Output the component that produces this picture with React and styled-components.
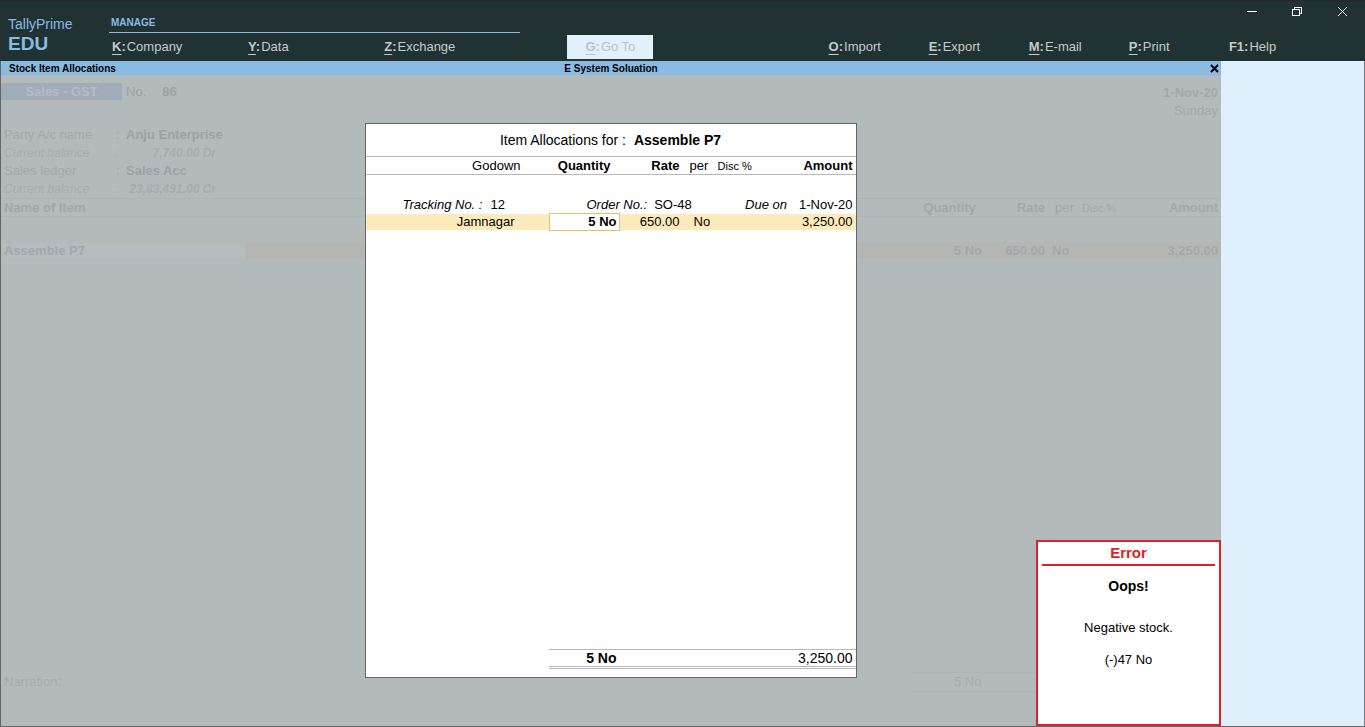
import React from "react";
import styled, { createGlobalStyle } from "styled-components";

const GlobalStyle = createGlobalStyle`
  *, *::before, *::after { box-sizing: border-box; }
  body {
    margin: 0;
    font-family: "Liberation Sans", Arial, sans-serif;
    font-size: 13px;
    line-height: 18px;
    color: #000;
  }
  button, input { font: inherit; color: inherit; }
  h1, h2, p, dl, dd { margin: 0; font: inherit; }
`;

const Screen = styled.div`
  display: flex;
  flex-direction: column;
  min-height: 100vh;
`;

/* ---------- top bar ---------- */

const TopBar = styled.header`
  display: grid;
  grid-template-columns: 109px 411fr 180fr 128fr 536fr;
  grid-template-rows: 32px 28px;
  border-top: 1px solid #2b2626;
  background: #203232;
  color: #c6cac9;
`;

const Brand = styled.div`
  grid-row: 1 / 3;
  padding: 14px 0 0 8px;
  color: #89bbe2;
  font-size: 14px;
`;

const Edition = styled.div`
  font-size: 19px;
  font-weight: bold;
  line-height: 22px;
`;

const GroupTitle = styled.div`
  padding: 13px 0 0 2px;
  border-bottom: 1px solid #89bbe2;
  color: #89bbe2;
  font-size: 10px;
  font-weight: bold;
`;

const WindowControls = styled.div`
  grid-column: 3 / 6;
  display: flex;
  justify-content: flex-end;
`;

const WindowButton = styled.button`
  width: 45px;
  height: 21px;
  padding: 0;
  border: 0;
  background: none;
  color: #fff;
`;

const WindowIcon = styled.svg`
  display: block;
  margin: 0 auto;
  fill: none;
  stroke: currentColor;
`;

const Menu = styled.nav`
  grid-row: 2;
  grid-column: ${(p) => p.$column};
  display: grid;
  grid-template-columns: ${(p) => p.$tracks};
  align-items: center;
  padding-left: ${(p) => p.$inset || 0}px;
`;

const MenuButton = styled.button`
  display: flex;
  gap: 1px;
  padding: 0;
  border: 0;
  background: none;
  text-align: left;
  white-space: nowrap;
`;

const GoToButton = styled(MenuButton)`
  justify-content: center;
  justify-self: center;
  align-items: center;
  width: 86px;
  height: 24px;
  background: #e2f0fa;
  color: #bcc3c9;
`;

const Shortcut = styled.b`
  u {
    text-decoration-thickness: 1px;
    text-underline-offset: 3px;
    text-decoration-skip-ink: none;
  }
`;

/* ---------- work area ---------- */

const Body = styled.div`
  flex: 1;
  display: flex;
  border-bottom: 1px solid #666;
`;

const Work = styled.main`
  flex: 1;
  display: flex;
  flex-direction: column;
  border-left: 1px solid #666;
`;

const SidePanel = styled.aside`
  width: 144px;
  border-right: 1px solid #777;
  background: #dff0fc;
`;

const TitleBar = styled.div`
  display: grid;
  grid-template-columns: 1fr auto 1fr;
  padding: 1px 8px 0;
  background: #89bbe2;
  font-size: 10px;
  font-weight: bold;
  line-height: 13px;
`;

const CloseButton = styled.button`
  justify-self: end;
  width: 9px;
  height: 13px;
  margin-right: -6px;
  padding: 0;
  border: 0;
  background: none;
`;

const Stage = styled.div`
  position: relative;
  flex: 1;
  display: flex;
  background: #b3babc;
`;

const Voucher = styled.section`
  flex: 1;
  display: flex;
  flex-direction: column;
  padding: 8px 0 34px;
  color: #a2a8aa;
`;

const VoucherHead = styled.div`
  display: flex;
  align-items: flex-start;
  margin-bottom: 6px;
  line-height: 17px;
`;

const VoucherType = styled.div`
  width: 121px;
  background: #a1acb9;
  color: #b3bcc5;
  font-weight: bold;
  text-align: center;
`;

const VoucherNumber = styled.div`
  display: flex;
  gap: 16px;
  padding-left: 4px;
  color: #9ca2a4;
`;

const VoucherDate = styled.div`
  margin-left: auto;
  padding: 1px 3px 0 0;
  line-height: 18px;
  text-align: right;
`;

const Fields = styled.dl`
  padding-left: 3px;
`;

const Field = styled.div`
  display: grid;
  grid-template-columns: 112px 10px auto 1fr;
  ${(p) => p.$minor && `font-size: 12px; font-style: italic; color: #a6adaf;`}

  dd { font-weight: bold; ${(p) => (p.$minor ? "width: 90px; text-align: right;" : "color: #9ca2a4;")} }
`;

const Table = styled.table`
  width: 100%;
  border-collapse: collapse;
  table-layout: fixed;

  td, th { padding: 0; text-align: right; }
`;

const HeadRow = styled.tr`
  height: 18px;
  line-height: 16px;
  border-top: 1px solid ${(p) => p.$line};
  border-bottom: 1px solid ${(p) => p.$line};
`;

const HeadCell = styled.th`
  && {
    padding-left: ${(p) => p.$left || 0}px;
    padding-right: ${(p) => p.$right || 0}px;
    text-align: ${(p) => p.$align || "right"};
  }
  font-weight: ${(p) => (p.$plain ? "normal" : "bold")};
  font-size: ${(p) => (p.$small ? 11 : 13)}px;
  white-space: nowrap;
`;

const Cell = styled.td`
  && {
    padding-left: ${(p) => p.$left || 0}px;
    padding-right: ${(p) => p.$right || 0}px;
    text-align: ${(p) => p.$align || "right"};
  }
`;

const SpacerRow = styled.tr`
  height: ${(p) => p.$height}px;
`;

const ItemRow = styled.tr`
  height: 17px;
  line-height: 17px;
  background: #b4b6b4;
  font-weight: bold;
`;

const ItemInput = styled.input`
  display: block;
  width: 245px;
  height: 17px;
  padding: 0 0 0 2px;
  border: 1px solid #b6b9b4;
  border-radius: 0;
  outline: 0;
  background: #b5bbbe;
  font-weight: bold;
`;

const VoucherFoot = styled.footer`
  display: grid;
  grid-template-columns: 1fr 310px;
  margin-top: auto;
  padding-left: 3px;
  line-height: 18px;
  color: #a6acae;

  label { padding-top: 1px; }
`;

const VoucherTotal = styled.div`
  padding-left: 43px;
  border-top: 1px solid #afb5b7;
  border-bottom: 1px solid #afb5b7;
`;

/* ---------- allocation dialog ---------- */

const Overlay = styled.div`
  position: absolute;
  inset: 0;
  display: flex;
  justify-content: center;
  padding: 48px 1px 48px 0;
`;

const Dialog = styled.section`
  display: flex;
  flex-direction: column;
  width: 492px;
  padding-bottom: 8px;
  border: 1px solid #666;
  background: #fff;
`;

const DialogTitle = styled.h2`
  display: flex;
  justify-content: center;
  gap: 8px;
  font-size: 14px;
  line-height: 32px;
`;

const Tracking = styled.div`
  display: flex;
  padding: 0 3px 0 37px;
  line-height: 18px;
  white-space: pre;
`;

const TrackingPart = styled.div`
  display: flex;
  gap: ${(p) => p.$gap}px;
  width: ${(p) => p.$width || "auto"};
  margin-left: ${(p) => (p.$end ? "auto" : 0)};
`;

const AllocationRow = styled.tr`
  height: 16px;
  line-height: 16px;
  background: #fdeabc;
`;

const QuantityInput = styled.input`
  display: block;
  width: 71px;
  height: 18px;
  margin: -1px 0;
  padding: 0 2px;
  border: 1px solid #e8c067;
  border-radius: 0;
  outline: 0;
  background: #fff;
  font-weight: bold;
  text-align: right;
`;

const DialogTotal = styled.div`
  display: grid;
  grid-template-columns: 68px 1fr;
  margin-top: auto;
  margin-left: 183px;
  padding-right: 3px;
  border-top: 1px solid #b8b8b8;
  border-bottom: 3px double #b8b8b8;
  font-size: 14px;
  line-height: 16px;
  text-align: right;
`;

/* ---------- error box ---------- */

const ErrorBox = styled.section`
  position: absolute;
  right: 0;
  bottom: 0;
  width: 185px;
  height: 186px;
  padding: 0 4px;
  border: 2px solid #e02226;
  background: #fff;
  text-align: center;
`;

const ErrorTitle = styled.h2`
  border-bottom: 2px solid #e02226;
  color: #e02226;
  font-size: 15px;
  font-weight: bold;
  line-height: 22px;
`;

const ErrorLine = styled.p`
  margin-top: ${(p) => p.$space}px;
  font-size: ${(p) => (p.$strong ? 14 : 13)}px;
  font-weight: ${(p) => (p.$strong ? "bold" : "normal")};
`;

const manageMenu = [["K", "Company"], ["Y", "Data"], ["Z", "Exchange"]];
const toolMenu = [["O", "Import"], ["E", "Export"], ["M", "E-mail"], ["P", "Print"], ["F1", "Help"]];

function MenuLabel({ hotkey, text }) {
  return (
    <>
      <Shortcut>{hotkey.length === 1 ? <u>{hotkey}</u> : hotkey}:</Shortcut>
      <span>{text}</span>
    </>
  );
}

const fields = [
  ["Party A/c name", "Anju Enterprise", false],
  ["Current balance", "7,740.00 Dr", true],
  ["Sales ledger", "Sales Acc", false],
  ["Current balance", "23,83,491.00 Cr", true],
];

export default function App() {
  return (
    <Screen>
      <GlobalStyle />
      <TopBar>
        <Brand>
          TallyPrime
          <Edition>EDU</Edition>
        </Brand>
        <GroupTitle>MANAGE</GroupTitle>
        <WindowControls>
          <WindowButton aria-label="Minimize">
            <WindowIcon width="11" height="11" shapeRendering="crispEdges"><path d="M0 5.5H10" /></WindowIcon>
          </WindowButton>
          <WindowButton aria-label="Restore">
            <WindowIcon width="11" height="11" shapeRendering="crispEdges">
              <path d="M0.5 3.5H7.5V9.5H0.5ZM2.5 3.5V1.5H9.5V7.5H7.5" />
            </WindowIcon>
          </WindowButton>
          <WindowButton aria-label="Close">
            <WindowIcon width="11" height="11"><path d="M1 1L10 10M10 1L1 10" /></WindowIcon>
          </WindowButton>
        </WindowControls>
        <Menu $column="2" $tracks="repeat(3, 1fr)" $inset={3}>
          {manageMenu.map(([k, t]) => (
            <MenuButton key={k}><MenuLabel hotkey={k} text={t} /></MenuButton>
          ))}
        </Menu>
        <Menu $column="3" $tracks="1fr">
          <GoToButton><MenuLabel hotkey="G" text="Go To" /></GoToButton>
        </Menu>
        <Menu $column="5" $tracks="repeat(4, 100fr) 136fr">
          {toolMenu.map(([k, t]) => (
            <MenuButton key={k}><MenuLabel hotkey={k} text={t} /></MenuButton>
          ))}
        </Menu>
      </TopBar>

      <Body>
        <Work>
          <TitleBar>
            <span>Stock Item Allocations</span>
            <span>E System Soluation</span>
            <CloseButton aria-label="Close screen">
              <WindowIcon width="9" height="9" viewBox="0 0 9 9" strokeWidth="2">
                <path d="M1 1L8 8M8 1L1 8" />
              </WindowIcon>
            </CloseButton>
          </TitleBar>

          <Stage>
            <Voucher>
              <VoucherHead>
                <VoucherType>Sales - GST</VoucherType>
                <VoucherNumber>
                  <span>No.</span>
                  <b>86</b>
                </VoucherNumber>
                <VoucherDate>
                  <b>1-Nov-20</b>
                  <div>Sunday</div>
                </VoucherDate>
              </VoucherHead>
              <Fields>
                {fields.map(([label, value, minor]) => (
                  <Field key={value} $minor={minor}>
                    <dt>{label}</dt>
                    <span>:</span>
                    <dd>{value}</dd>
                  </Field>
                ))}
              </Fields>
              <Table>
                <colgroup>
                  <col />
                  <col width="72" />
                  <col width="62" />
                  <col width="33" />
                  <col width="42" />
                  <col width="101" />
                </colgroup>
                <thead>
                  <HeadRow $line="#afb5b7">
                    <HeadCell $align="left" $left={3}>Name of Item</HeadCell>
                    <HeadCell $right={7}>Quantity</HeadCell>
                    <HeadCell>Rate</HeadCell>
                    <HeadCell $plain $align="left" $left={10}>per</HeadCell>
                    <HeadCell $plain $small $align="left" $left={4}>Disc %</HeadCell>
                    <HeadCell $right={3}>Amount</HeadCell>
                  </HeadRow>
                </thead>
                <tbody>
                  <SpacerRow $height={25}><td colSpan={6} /></SpacerRow>
                  <ItemRow>
                    <Cell $align="left">
                      <ItemInput aria-label="Name of item" defaultValue="Assemble P7" />
                    </Cell>
                    <Cell $right={1}>5 No</Cell>
                    <Cell>650.00</Cell>
                    <Cell $align="left" $left={7}>No</Cell>
                    <Cell />
                    <Cell $right={3}>3,250.00</Cell>
                  </ItemRow>
                </tbody>
              </Table>
              <VoucherFoot>
                <label>Narration:</label>
                <VoucherTotal>5 No</VoucherTotal>
              </VoucherFoot>
            </Voucher>

            <Overlay>
              <Dialog role="dialog" aria-label="Item Allocations">
                <DialogTitle>
                  <span>Item Allocations for :</span>
                  <b>Assemble P7</b>
                </DialogTitle>
                <Table>
                  <colgroup>
                    <col />
                    <col width="71" />
                    <col width="60" />
                    <col width="34" />
                    <col width="42" />
                    <col width="100" />
                  </colgroup>
                  <thead>
                    <HeadRow $line="#b8b8b8">
                      <HeadCell $plain $right={28}>Godown</HeadCell>
                      <HeadCell $right={9}>Quantity</HeadCell>
                      <HeadCell>Rate</HeadCell>
                      <HeadCell $plain $align="left" $left={10}>per</HeadCell>
                      <HeadCell $plain $small $align="left" $left={4}>Disc %</HeadCell>
                      <HeadCell $right={3}>Amount</HeadCell>
                    </HeadRow>
                  </thead>
                  <tbody>
                    <SpacerRow $height={21}><td colSpan={6} /></SpacerRow>
                    <tr>
                      <Cell colSpan={6} $align="left">
                        <Tracking>
                          <TrackingPart $gap={8} $width="184px"><i>Tracking No. :</i><span>12</span></TrackingPart>
                          <TrackingPart $gap={7}><i>Order No.:</i><span>SO-48</span></TrackingPart>
                          <TrackingPart $gap={12} $end><i>Due on</i><span>1-Nov-20</span></TrackingPart>
                        </Tracking>
                      </Cell>
                    </tr>
                    <AllocationRow>
                      <Cell $right={34}>Jamnagar</Cell>
                      <Cell>
                        <QuantityInput aria-label="Quantity" defaultValue="5 No" />
                      </Cell>
                      <Cell>650.00</Cell>
                      <Cell $align="left" $left={14}>No</Cell>
                      <Cell />
                      <Cell $right={3}>3,250.00</Cell>
                    </AllocationRow>
                  </tbody>
                </Table>
                <DialogTotal>
                  <b>5 No</b>
                  <span>3,250.00</span>
                </DialogTotal>
              </Dialog>
            </Overlay>

            <ErrorBox role="alert">
              <ErrorTitle>Error</ErrorTitle>
              <ErrorLine $strong $space={11}>Oops!</ErrorLine>
              <ErrorLine $space={24}>Negative stock.</ErrorLine>
              <ErrorLine $space={14}>(-)47 No</ErrorLine>
            </ErrorBox>
          </Stage>
        </Work>
        <SidePanel />
      </Body>
    </Screen>
  );
}
